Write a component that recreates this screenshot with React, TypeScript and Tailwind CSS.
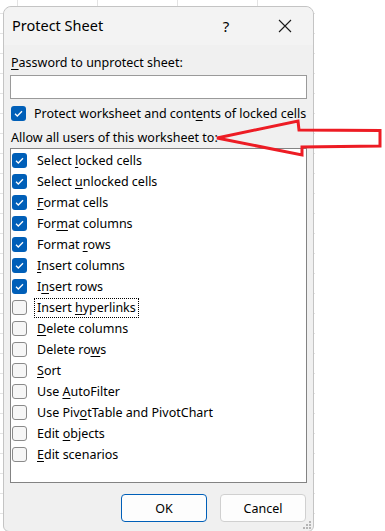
const items: [string, number, boolean][] = [
  ["Select locked cells", 7, true],
  ["Select unlocked cells", 7, true],
  ["Format cells", 0, true],
  ["Format columns", 3, true],
  ["Format rows", 7, true],
  ["Insert columns", 0, true],
  ["Insert rows", 1, true],
  ["Insert hyperlinks", 7, false],
  ["Delete columns", 0, false],
  ["Delete rows", 9, false],
  ["Sort", 0, false],
  ["Use AutoFilter", 4, false],
  ["Use PivotTable and PivotChart", 7, false],
  ["Edit objects", 5, false],
  ["Edit scenarios", 0, false],
];

const Key = ({ text, at }: { text: string; at: number }) => (
  <>
    {text.slice(0, at)}
    <span className="underline underline-offset-2">{text[at]}</span>
    {text.slice(at + 1)}
  </>
);

const Box = ({ checked }: { checked: boolean }) =>
  checked ? (
    <span className="w-[15px] h-[15px] rounded-[3px] bg-[#005fb8] flex items-center justify-center shrink-0">
      <svg width="15" height="15" viewBox="0 0 15 15">
        <path d="M4 7.8 L6.3 10 L11 5.2" fill="none" stroke="white" strokeWidth="1.3" />
      </svg>
    </span>
  ) : (
    <span className="w-[15px] h-[15px] rounded-[3px] border border-[#8a8a8a] bg-[#f6f6f6] shrink-0" />
  );

const App = () => {
  return (
    <div
      className="relative w-[385px] h-[531px] bg-white overflow-hidden text-black"
      style={{ fontFamily: '"Noto Sans", "Open Sans", sans-serif' }}
    >
      <div className="w-[315px] h-full pl-[3px] pt-[6px] bg-[linear-gradient(to_right,#e3e3e3_1px,transparent_1px),linear-gradient(to_bottom,#e3e3e3_1px,transparent_1px)] bg-[size:80px_20px] bg-[position:17px_13px]">
        <div className="w-[311px] h-[526px] rounded-t-[8px] rounded-b-[6px] border border-[#c4c4c4] bg-[#f0f0f0] flex flex-col relative">
          <div className="h-[38px] bg-[#f3f3f3] rounded-t-[8px] flex items-center pl-[8px] text-[14.5px]">
            <span className="flex-1">Protect Sheet</span>
            <span className="w-[20px] text-center mr-[42px] text-[15px]">?</span>
            <svg width="14" height="14" viewBox="0 0 14 14" className="mr-[21px]">
              <path d="M1 1 L13 13 M13 1 L1 13" stroke="#1a1a1a" strokeWidth="1.1" />
            </svg>
          </div>
          <div className="flex flex-col px-[6px] text-[12.5px] leading-[17px]">
            <div className="mt-[9px] pl-[1px]"><Key text="Password to unprotect sheet:" at={0} /></div>
            <div className="mt-[4px] h-[24px] w-[297px] bg-white border border-[#9a9a9a]" />
            <div className="mt-[6px] flex items-center h-[17px] pl-[1px]">
              <Box checked />
              <span className="ml-[8px]"><Key text="Protect worksheet and contents of locked cells" at={26} /></span>
            </div>
            <div className="mt-[7px] pl-[1px]">Allow all users of this worksheet to:</div>
            <div className="mt-[2px] w-[297px] h-[335px] bg-white border border-[#838383] pt-[1px] pl-[1px]">
              {items.map(([label, at, checked]) => (
                <div key={label} className="h-[21px] flex items-center">
                  <Box checked={checked} />
                  <span
                    className={
                      "ml-[7px] px-[2px] h-[20px] flex items-center border " +
                      (label === "Insert hyperlinks" ? "border-dotted border-black" : "border-transparent")
                    }
                  >
                    <span><Key text={label} at={at} /></span>
                  </span>
                </div>
              ))}
            </div>
            <div className="mt-[11px] flex justify-end gap-[13px] pr-[1px]">
              <button className="w-[86px] h-[28px] rounded-[4px] border border-[#005fb8] bg-[#fdfdfd] text-[12.5px]">OK</button>
              <button className="w-[86px] h-[28px] rounded-[4px] border border-[#d0d0d0] bg-[#fdfdfd] text-[12.5px]">Cancel</button>
            </div>
          </div>
          <svg width="10" height="10" viewBox="0 0 10 10" className="absolute right-[1px] bottom-[1px]">
            <rect x="7" y="1" width="2" height="2" fill="#b5b5b5" />
            <rect x="4" y="4" width="2" height="2" fill="#b5b5b5" />
            <rect x="7" y="4" width="2" height="2" fill="#b5b5b5" />
            <rect x="1" y="7" width="2" height="2" fill="#b5b5b5" />
            <rect x="4" y="7" width="2" height="2" fill="#b5b5b5" />
            <rect x="7" y="7" width="2" height="2" fill="#b5b5b5" />
          </svg>
        </div>
      </div>
      <svg width="385" height="531" className="absolute left-0 top-0 pointer-events-none">
        <polygon
          points="217,138 298,121 299,130 380,130.5 380,146 302,147 302,155"
          fill="none"
          stroke="#ed1c24"
          strokeWidth="3"
        />
      </svg>
    </div>
  );
};

export default App;
